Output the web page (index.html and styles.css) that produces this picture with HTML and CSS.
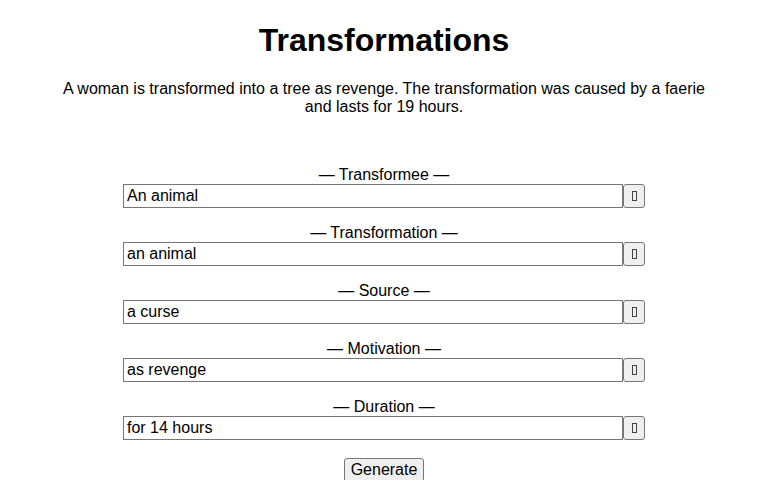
FILE: index.html
```html
<!DOCTYPE html>
<html lang="en">
<head>
<meta charset="utf-8">
<title>Transformations</title>
<link rel="stylesheet" href="styles.css">
</head>
<body>
<h1 class="title">Transformations</h1>
<p class="summary">A woman is transformed into a tree as revenge. The transformation was caused by a faerie and lasts for 19 hours.</p>
<form class="form">
  <div class="field">
    <label class="field-label" for="f1">— Transformee —</label>
    <div class="field-row"><input class="field-input" id="f1" type="text" value="An animal"><button class="dice" type="button"><span class="tofu"></span></button></div>
  </div>
  <div class="field">
    <label class="field-label" for="f2">— Transformation —</label>
    <div class="field-row"><input class="field-input" id="f2" type="text" value="an animal"><button class="dice" type="button"><span class="tofu"></span></button></div>
  </div>
  <div class="field">
    <label class="field-label" for="f3">— Source —</label>
    <div class="field-row"><input class="field-input" id="f3" type="text" value="a curse"><button class="dice" type="button"><span class="tofu"></span></button></div>
  </div>
  <div class="field">
    <label class="field-label" for="f4">— Motivation —</label>
    <div class="field-row"><input class="field-input" id="f4" type="text" value="as revenge"><button class="dice" type="button"><span class="tofu"></span></button></div>
  </div>
  <div class="field">
    <label class="field-label" for="f5">— Duration —</label>
    <div class="field-row"><input class="field-input" id="f5" type="text" value="for 14 hours"><button class="dice" type="button"><span class="tofu"></span></button></div>
  </div>
  <div class="actions"><button class="generate" type="button">Generate</button></div>
</form>
</body>
</html>
```
FILE: styles.css
```css
body {
  margin: 0 8px;
  font-family: "Liberation Sans", Arial, sans-serif;
  font-size: 16px;
  color: #000;
  background: #fff;
  text-align: center;
}
.title {
  font-size: 32px;
  font-weight: bold;
  margin: 21.5px 0 21.44px;
}
.summary {
  max-width: 660px;
  margin: 16px auto;
}
.form {
  margin-top: 50px;
}
.field {
  margin-bottom: 16px;
}
.field-label {
  display: block;
  line-height: 18px;
}
.field-row {
  display: flex;
  justify-content: center;
}
.field-input {
  box-sizing: border-box;
  width: 500px;
  height: 24px;
  font: inherit;
  padding: 1px 3px;
  margin: 0;
  border: 1px solid #767676;
  border-radius: 0;
  background: #fff;
  color: #000;
}
.dice {
  box-sizing: border-box;
  width: 22px;
  height: 24px;
  margin: 0;
  padding: 0;
  border: 1px solid #767676;
  border-radius: 3px;
  background: #efefef;
  display: flex;
  align-items: center;
  justify-content: center;
}
.tofu {
  display: block;
  width: 5px;
  height: 10px;
  border: 1px solid #444;
  box-sizing: border-box;
}
.actions {
  margin-top: 18px;
}
.generate {
  font: inherit;
  margin: 0;
  padding: 1px 6px;
  border: 1px solid #767676;
  border-radius: 3px;
  background: #efefef;
  color: #000;
  height: 24px;
}
```
